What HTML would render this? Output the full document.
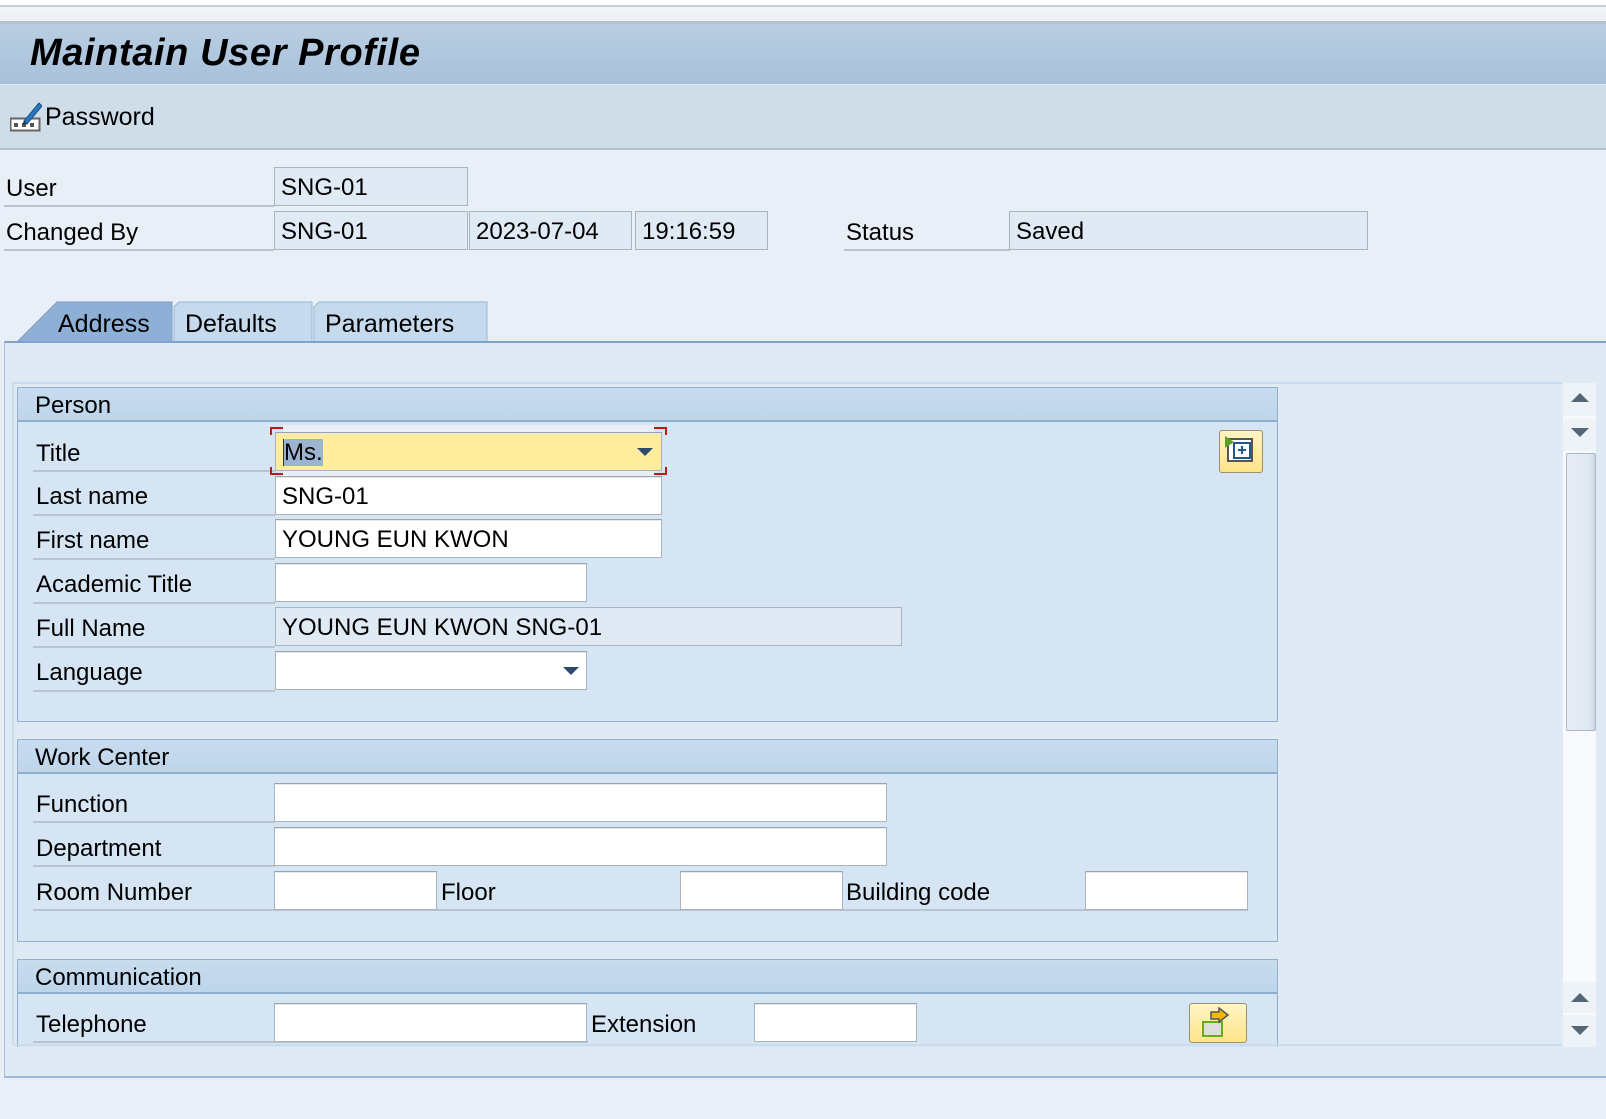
<!DOCTYPE html>
<html><head><meta charset="utf-8"><style>
*{box-sizing:border-box;margin:0;padding:0}
body{width:1606px;height:1119px;position:relative;overflow:hidden;background:#e8eff7;font-family:"Liberation Sans",Arial,sans-serif;color:#000}
.a{position:absolute}
.lbl{position:absolute;font-size:24px;line-height:30px;white-space:nowrap;margin-top:2px}
.f{position:absolute;background:#fff;border:1px solid #a9b3bd;border-top-color:#9aa3ad;box-shadow:inset 0 1px 0 #e8e8e8;font-size:24px;line-height:40px;padding-left:6px;white-space:nowrap}
.ro{background:#dfeaf5;border:1px solid #a8b4c0;box-shadow:none}
.ln{position:absolute;height:2px;background:#b9c4cf}
.grp{position:absolute;left:17px;width:1261px;background:#d5e5f3;border:1px solid #93afcf}
.gh{position:absolute;left:0;right:0;top:0;height:34px;background:linear-gradient(#c8dcee,#bed5ea);border-bottom:2px solid #8fadcc;font-size:24px;line-height:36px;padding-left:17px}
.dd{position:absolute;width:0;height:0;border-left:8px solid transparent;border-right:8px solid transparent;border-top:8px solid #2e4a6e}
</style></head><body>
<div class="a" style="left:0;top:0;width:1606px;height:5px;background:#fff"></div>
<div class="a" style="left:0;top:5px;width:1606px;height:2px;background:#c8ced8"></div>
<div class="a" style="left:0;top:7px;width:1606px;height:14px;background:linear-gradient(#f2f6f6,#ecf0f8)"></div>
<div class="a" style="left:0;top:21px;width:1606px;height:3px;background:#b8c0cc"></div>
<div class="a" style="left:0;top:24px;width:1606px;height:60px;background:linear-gradient(#b9cee2,#a8c1da)"></div>
<div class="a" style="left:30px;top:28px;font-size:38px;line-height:50px;font-weight:bold;font-style:italic;letter-spacing:0.6px">Maintain User Profile</div>
<div class="a" style="left:0;top:84px;width:1606px;height:1px;background:#dbe6f0"></div>
<div class="a" style="left:0;top:85px;width:1606px;height:63px;background:#cfdde9"></div>
<div class="a" style="left:0;top:148px;width:1606px;height:2px;background:#b0bfcd"></div>
<svg class="a" style="left:10px;top:99px" width="32" height="33" viewBox="0 0 32 33">
<rect x="0.5" y="19.5" width="29" height="12" fill="#fff" stroke="#666" stroke-width="2"/>
<rect x="4" y="24" width="4" height="4" fill="#555"/><rect x="12" y="24" width="4" height="4" fill="#555"/><rect x="20" y="24" width="4" height="4" fill="#555"/>
<path d="M14 22 L29 4 L32 7 L17 25 Z" fill="#2a78c0" stroke="#1a4e8a"/><path d="M12 26 L14 22 L17 25 Z" fill="#333"/>
</svg>
<div class="a" style="left:45px;top:102px;font-size:25px;line-height:30px">Password</div>

<div class="lbl" style="left:6px;top:172px">User</div>
<div class="ln" style="left:4px;top:205px;width:270px"></div>
<div class="f ro" style="left:274px;top:167px;width:194px;height:39px">SNG-01</div>
<div class="lbl" style="left:6px;top:216px">Changed By</div>
<div class="ln" style="left:4px;top:249px;width:270px"></div>
<div class="f ro" style="left:274px;top:211px;width:194px;height:39px">SNG-01</div>
<div class="f ro" style="left:469px;top:211px;width:163px;height:39px">2023-07-04</div>
<div class="f ro" style="left:635px;top:211px;width:133px;height:39px">19:16:59</div>
<div class="lbl" style="left:846px;top:216px">Status</div>
<div class="ln" style="left:844px;top:249px;width:166px"></div>
<div class="f ro" style="left:1009px;top:211px;width:359px;height:39px">Saved</div>

<svg class="a" style="left:0;top:300px" width="500" height="44">
<path d="M17 42 L57 2 L172 2 L172 42 Z" fill="#8fb0d6" stroke="#7f9fc4"/>
<path d="M174 42 L174 7 L179 2 L312 2 L312 42 Z" fill="#c6daee" stroke="#9ab5d2"/>
<path d="M314 42 L314 7 L319 2 L487 2 L487 42 Z" fill="#c6daee" stroke="#9ab5d2"/>
</svg>
<div class="a" style="left:58px;top:309px;font-size:25px;line-height:30px">Address</div>
<div class="a" style="left:185px;top:309px;font-size:25px;line-height:30px">Defaults</div>
<div class="a" style="left:325px;top:309px;font-size:25px;line-height:30px">Parameters</div>

<div class="a" style="left:4px;top:341px;width:1602px;height:737px;background:#dfeaf4;border-top:2px solid #7fa3cc;border-left:1px solid #a9c0d8;border-bottom:2px solid #9db8d6"></div>
<div class="a" style="left:12px;top:382px;width:1550px;height:2px;background:#cbdcec"></div>
<div class="a" style="left:12px;top:382px;width:2px;height:663px;background:#cbdcec"></div>

<!-- Person -->
<div class="grp" style="top:387px;height:335px"><div class="gh">Person</div></div>
<div class="lbl" style="left:36px;top:437px">Title</div>
<div class="ln" style="left:33px;top:470px;width:242px"></div>
<div class="a" style="left:270px;top:427px;width:397px;height:48px;border:2px solid #c01818"></div>
<div class="a" style="left:283px;top:425px;width:371px;height:52px;background:#e8eff7"></div>
<div class="a" style="left:268px;top:435px;width:401px;height:32px;background:#d5e5f3"></div>
<div class="f" style="left:275px;top:432px;width:387px;height:39px;background:#ffec9c;padding-left:7px"><span style="background:#9bb4d2;border-left:1px solid #333">Ms.</span></div>
<div class="dd" style="left:637px;top:448px"></div>
<div class="lbl" style="left:36px;top:480px">Last name</div>
<div class="ln" style="left:33px;top:514px;width:242px"></div>
<div class="f" style="left:275px;top:476px;width:387px;height:39px">SNG-01</div>
<div class="lbl" style="left:36px;top:524px">First name</div>
<div class="ln" style="left:33px;top:558px;width:242px"></div>
<div class="f" style="left:275px;top:519px;width:387px;height:39px">YOUNG EUN KWON</div>
<div class="lbl" style="left:36px;top:568px">Academic Title</div>
<div class="ln" style="left:33px;top:602px;width:242px"></div>
<div class="f" style="left:275px;top:563px;width:312px;height:39px"></div>
<div class="lbl" style="left:36px;top:612px">Full Name</div>
<div class="ln" style="left:33px;top:646px;width:242px"></div>
<div class="f ro" style="left:275px;top:607px;width:627px;height:39px">YOUNG EUN KWON SNG-01</div>
<div class="lbl" style="left:36px;top:656px">Language</div>
<div class="ln" style="left:33px;top:690px;width:242px"></div>
<div class="f" style="left:275px;top:651px;width:312px;height:39px"></div>
<div class="dd" style="left:563px;top:667px"></div>
<div class="a" style="left:1219px;top:430px;width:44px;height:43px;background:linear-gradient(#fff4c4,#ffe48a);border:1px solid #9a9070;border-radius:3px"></div>
<svg class="a" style="left:1225px;top:436px" width="32" height="30" viewBox="0 0 32 30">
<path d="M3 3 H27 V25 H3 Z" fill="#fff" stroke="#555" stroke-width="2"/>
<rect x="9" y="7" width="16" height="15" fill="#fff" stroke="#1e5a8e" stroke-width="2"/>
<path d="M13 14 H21 M17 10 V18" stroke="#1e5a8e" stroke-width="2"/>
<path d="M0 0 L9 6 L0 12 Z" fill="#5aa020"/>
</svg>

<!-- Work Center -->
<div class="grp" style="top:739px;height:203px"><div class="gh">Work Center</div></div>
<div class="lbl" style="left:36px;top:788px">Function</div>
<div class="ln" style="left:33px;top:821px;width:242px"></div>
<div class="f" style="left:274px;top:783px;width:613px;height:39px"></div>
<div class="lbl" style="left:36px;top:832px">Department</div>
<div class="ln" style="left:33px;top:865px;width:242px"></div>
<div class="f" style="left:274px;top:827px;width:613px;height:39px"></div>
<div class="lbl" style="left:36px;top:876px">Room Number</div>
<div class="ln" style="left:33px;top:909px;width:1215px"></div>
<div class="f" style="left:274px;top:871px;width:163px;height:39px"></div>
<div class="lbl" style="left:441px;top:876px">Floor</div>
<div class="f" style="left:680px;top:871px;width:163px;height:39px"></div>
<div class="lbl" style="left:846px;top:876px">Building code</div>
<div class="f" style="left:1085px;top:871px;width:163px;height:39px"></div>

<!-- Communication -->
<div class="grp" style="top:959px;height:88px;border-bottom:none"><div class="gh">Communication</div></div>
<div class="lbl" style="left:36px;top:1008px">Telephone</div>
<div class="ln" style="left:33px;top:1041px;width:555px"></div>
<div class="f" style="left:274px;top:1003px;width:313px;height:39px"></div>
<div class="lbl" style="left:591px;top:1008px">Extension</div>
<div class="f" style="left:754px;top:1003px;width:163px;height:39px"></div>
<div class="a" style="left:1189px;top:1003px;width:58px;height:40px;background:linear-gradient(#fff4c4,#ffe48a);border:1px solid #9a9070;border-radius:3px"></div>
<svg class="a" style="left:1201px;top:1007px" width="32" height="32" viewBox="0 0 32 32">
<rect x="2" y="15" width="19" height="14" fill="#ddd" stroke="#6aaa1e" stroke-width="2"/>
<path d="M10 5 H18 V1 L27 8 L18 15 V12 H10 Z" fill="#f4b800" stroke="#555" stroke-width="1.5"/>
</svg>
<div class="a" style="left:14px;top:1044px;width:1548px;height:2px;background:#cbdcec"></div>

<!-- scrollbar -->
<div class="a" style="left:1563px;top:383px;width:33px;height:664px;background:#f7f9fb"></div>
<div class="a" style="left:1563px;top:383px;width:33px;height:33px;background:#eef3f8"></div>
<div class="a" style="left:1563px;top:419px;width:33px;height:32px;background:#eef3f8"></div>
<div class="a" style="left:1566px;top:453px;width:30px;height:278px;background:linear-gradient(90deg,#e6edf5,#dfe7f0 80%,#ccd8e4);border:1px solid #a8b8c8;border-radius:2px"></div>
<div class="a" style="left:1563px;top:982px;width:33px;height:31px;background:#eef3f8"></div>
<div class="a" style="left:1563px;top:1015px;width:33px;height:32px;background:#eef3f8"></div>
<div class="a" style="left:1571px;top:393px;width:0;height:0;border-left:9px solid transparent;border-right:9px solid transparent;border-bottom:9px solid #556677"></div>
<div class="a" style="left:1571px;top:428px;width:0;height:0;border-left:9px solid transparent;border-right:9px solid transparent;border-top:9px solid #556677"></div>
<div class="a" style="left:1571px;top:993px;width:0;height:0;border-left:9px solid transparent;border-right:9px solid transparent;border-bottom:9px solid #556677"></div>
<div class="a" style="left:1571px;top:1026px;width:0;height:0;border-left:9px solid transparent;border-right:9px solid transparent;border-top:9px solid #556677"></div>
</body></html>
